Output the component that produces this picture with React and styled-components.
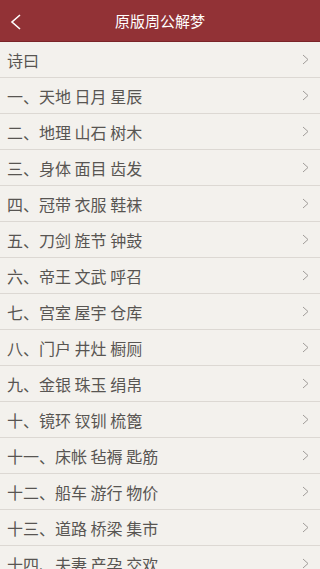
import React from "react";
import styled, { createGlobalStyle } from "styled-components";

const GlobalStyle = createGlobalStyle`
  body {
    margin: 0;
    background: #f3f1ed;
    font-family: "Noto Sans CJK SC", "Noto Sans", sans-serif;
  }
`;

const items = [
  "诗曰",
  "一、天地 日月 星辰",
  "二、地理 山石 树木",
  "三、身体 面目 齿发",
  "四、冠带 衣服 鞋袜",
  "五、刀剑 旌节 钟鼓",
  "六、帝王 文武 呼召",
  "七、宫室 屋宇 仓库",
  "八、门户 井灶 橱厕",
  "九、金银 珠玉 绢帛",
  "十、镜环 钗钏 梳篦",
  "十一、床帐 毡褥 匙筋",
  "十二、船车 游行 物价",
  "十三、道路 桥梁 集市",
  "十四、夫妻 产孕 交欢",
];

const Page = styled.div`
  width: 320px;
  height: 569px;
  overflow: hidden;
  background: #f3f1ed;
`;

const Header = styled.header`
  height: 41px;
  background: #923236;
  border-bottom: 1px solid #7a2428;
  display: flex;
  align-items: center;
  justify-content: center;
  position: relative;
`;

const Title = styled.h1`
  margin: 0;
  color: #fff;
  font-size: 15px;
  font-weight: 400;
`;

const BackButton = styled.div`
  position: absolute;
  left: 9px;
  top: 12px;
  width: 14px;
  height: 18px;
`;

const List = styled.ul`
  margin: 0;
  padding: 0;
  list-style: none;
`;

const Row = styled.li`
  height: 35px;
  border-bottom: 1px solid #dcd8d3;
  display: flex;
  align-items: center;
  justify-content: space-between;
  padding: 0 11px 0 7px;
  color: #585552;
  font-size: 16px;
`;

const Chevron = styled.svg`
  width: 7px;
  height: 11px;
`;

export default function App() {
  return (
    <Page>
      <GlobalStyle />
      <Header>
        <BackButton>
          <svg width="14" height="18" viewBox="0 0 14 18">
            <path d="M11 2 L3 9 L11 16" stroke="#fff" strokeWidth="1.6" fill="none" />
          </svg>
        </BackButton>
        <Title>原版周公解梦</Title>
      </Header>
      <List>
        {items.map((t) => (
          <Row key={t}>
            <span>{t}</span>
            <Chevron viewBox="0 0 7 11">
              <path d="M1 1 L6 5.5 L1 10" stroke="#a09c99" strokeWidth="1" fill="none" />
            </Chevron>
          </Row>
        ))}
      </List>
    </Page>
  );
}
